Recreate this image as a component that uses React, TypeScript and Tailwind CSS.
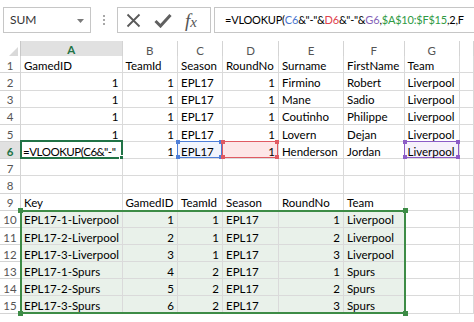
import type { ReactNode } from 'react'

type Val = string | number

const COLS = ['A', 'B', 'C', 'D', 'E', 'F', 'G', '']

const DATA: Val[][] = [
  ['GamedID', 'TeamId', 'Season', 'RoundNo', 'Surname', 'FirstName', 'Team'],
  [1, 1, 'EPL17', 1, 'Firmino', 'Robert', 'Liverpool'],
  [1, 1, 'EPL17', 1, 'Mane', 'Sadio', 'Liverpool'],
  [1, 1, 'EPL17', 1, 'Coutinho', 'Philippe', 'Liverpool'],
  [1, 1, 'EPL17', 1, 'Lovern', 'Dejan', 'Liverpool'],
  ['=VLOOKUP(C6&"-"', 1, 'EPL17', 1, 'Henderson', 'Jordan', 'Liverpool'],
  [],
  [],
  ['Key', 'GamedID', 'TeamId', 'Season', 'RoundNo', 'Team'],
  ['EPL17-1-Liverpool', 1, 1, 'EPL17', 1, 'Liverpool'],
  ['EPL17-2-Liverpool', 2, 1, 'EPL17', 2, 'Liverpool'],
  ['EPL17-3-Liverpool', 3, 1, 'EPL17', 3, 'Liverpool'],
  ['EPL17-1-Spurs', 4, 2, 'EPL17', 1, 'Spurs'],
  ['EPL17-2-Spurs', 5, 2, 'EPL17', 2, 'Spurs'],
  ['EPL17-3-Spurs', 6, 2, 'EPL17', 3, 'Spurs'],
]

const GRID = 'grid grid-cols-[21px_101.5px_55.5px_45px_56px_65px_60.5px_55.5px_1fr]'

function Corners({ color }: { color: string }) {
  const dot = `absolute w-[4px] h-[4px] ${color}`
  return (
    <>
      <span className={`${dot} -left-[2px] -top-[2px]`} />
      <span className={`${dot} -right-[2px] -top-[2px]`} />
      <span className={`${dot} -left-[2px] -bottom-[2px]`} />
      <span className={`${dot} -right-[2px] -bottom-[2px]`} />
    </>
  )
}

function Finder({ border, dot, fill }: { border: string; dot: string; fill: string }) {
  return (
    <div className={`absolute -left-[1px] -top-[1px] right-0 bottom-0 border ${border} ${fill}`}>
      <Corners color={dot} />
    </div>
  )
}

function Cell({ value, row, col }: { value?: Val; row: number; col: number }) {
  const isNum = typeof value === 'number'
  const inRange = row >= 9 && col <= 5
  const editing = row === 5 && col === 0
  let overlay: ReactNode = null

  if (editing) {
    overlay = (
      <div className="absolute -left-[1px] -top-[2px] -right-[1px] -bottom-[1px] border-2 border-[#217346]">
        <span className="absolute -right-[4px] -bottom-[4px] w-[6px] h-[6px] bg-[#217346] border border-white" />
      </div>
    )
  } else if (row === 5 && col === 2) {
    overlay = <Finder border="border-[#4f7fd8]" dot="bg-[#4f7fd8]" fill="bg-[#f1f5fd]" />
  } else if (row === 5 && col === 3) {
    overlay = <Finder border="border-[#e05a62]" dot="bg-[#e05a62]" fill="bg-[#fde6e7]" />
  } else if (row === 5 && col === 6) {
    overlay = <Finder border="border-[#8c5cc6]" dot="bg-[#8c5cc6]" fill="bg-[#f6f1fb]" />
  }

  return (
    <div
      className={`relative h-full border-r border-b border-[#dadada] ${inRange ? 'bg-[#e9f1ea]' : 'bg-white'}`}
    >
      {overlay}
      {value !== undefined && (
        <div
          className={`relative h-full overflow-hidden whitespace-nowrap leading-none flex items-end pb-[1px] ${
            editing ? 'pl-[2px] pr-0 tracking-[-0.45px]' : 'px-[3px]'
          } ${isNum ? 'justify-end' : 'justify-start'}`}
        >
          {value}
        </div>
      )}
    </div>
  )
}

function Toolbar() {
  return (
    <div className="flex items-start h-[41px] pt-[7px] bg-white">
      <div className="shrink-0 ml-[3px] w-[88px] h-[26px] border border-[#c6c6c6] flex items-center pl-[6px] pr-[6px] text-[12px] text-[#333]">
        <span className="flex-1">SUM</span>
        <svg width="7" height="4" viewBox="0 0 7 4" className="mt-[1px]">
          <path d="M0 0h7L3.5 4z" fill="#7a7a7a" />
        </svg>
      </div>
      <div className="shrink-0 w-[26px] h-[26px] flex flex-col items-center justify-center gap-[2px]">
        <span className="w-[2px] h-[2px] bg-[#a8a8a8]" />
        <span className="w-[2px] h-[2px] bg-[#a8a8a8]" />
        <span className="w-[2px] h-[2px] bg-[#a8a8a8]" />
      </div>
      <div className="shrink-0 w-[94px] h-[26px] border border-[#c6c6c6] flex items-center pl-[8px] gap-[13px]">
        <svg width="15" height="15" viewBox="0 0 15 15">
          <path d="M1.5 1.5l12 12M13.5 1.5l-12 12" stroke="#5a5a5a" strokeWidth="1.8" fill="none" />
        </svg>
        <svg width="18" height="15" viewBox="0 0 18 15">
          <path d="M1.5 8l5 5L16.5 2" stroke="#606060" strokeWidth="3" fill="none" />
        </svg>
        <span className="font-['Liberation_Serif',serif] italic text-[19px] leading-none text-[#555]">
          f<span className="text-[15px]">x</span>
        </span>
      </div>
      <div className="flex-1 min-w-0 ml-[3px] h-[26px] border border-[#c6c6c6] border-r-0 flex items-center pl-[10px] overflow-hidden whitespace-nowrap text-[11px] tracking-[-0.2px] text-black">
        <span>=VLOOKUP(</span>
        <span className="text-[#4a74cc]">C6</span>
        <span>&amp;"-"&amp;</span>
        <span className="text-[#e0424c]">D6</span>
        <span>&amp;"-"&amp;</span>
        <span className="text-[#8462b8]">G6</span>
        <span>,</span>
        <span className="text-[#2f9a44]">$A$10:$F$15</span>
        <span>,2,F</span>
      </div>
    </div>
  )
}

export default function App() {
  return (
    <div className="w-[474px] h-[322px] overflow-hidden bg-white font-['Lato','Liberation_Sans',sans-serif] text-[11.5px] text-black">
      <Toolbar />

      <div className={`${GRID} h-[15.3px] text-[#555]`}>
        <div className="relative border-r border-b border-[#c8c8c8] bg-white">
          <svg width="10" height="10" viewBox="0 0 10 10" className="absolute right-[2px] bottom-[2px]">
            <path d="M10 0v10H0z" fill="#d9d9d9" />
          </svg>
        </div>
        {COLS.map((c, i) => (
          <div
            key={i}
            className={`flex items-center justify-center border-r border-[#d4d4d4] ${
              i === 0
                ? 'bg-[#e1e1e1] text-[#217346] font-bold border-b-2 border-b-[#217346]'
                : 'bg-white border-b border-b-[#c8c8c8]'
            }`}
          >
            {c}
          </div>
        ))}
      </div>

      <div className="relative">
        {DATA.map((cells, r) => (
          <div key={r} className={`${GRID} h-[17.17px]`}>
            <div
              className={`flex items-end pb-[1px] leading-none justify-center border-r border-b border-[#d4d4d4] ${
                r === 5 ? 'bg-[#e1e1e1] text-[#217346] font-bold' : 'bg-white text-[#555]'
              }`}
            >
              {r + 1}
            </div>
            {COLS.map((_, c) => (
              <Cell key={c} value={cells[c]} row={r} col={c} />
            ))}
          </div>
        ))}
        <div className="absolute left-[20px] top-[153.5px] w-[385.5px] h-[104px] border-2 border-[#3d8c46] pointer-events-none">
          <span className="absolute -left-[4px] -top-[4px] w-[5px] h-[5px] bg-[#3d8c46]" />
          <span className="absolute -right-[4px] -top-[4px] w-[5px] h-[5px] bg-[#3d8c46]" />
          <span className="absolute -left-[4px] -bottom-[4px] w-[5px] h-[5px] bg-[#3d8c46]" />
          <span className="absolute -right-[4px] -bottom-[4px] w-[5px] h-[5px] bg-[#3d8c46]" />
        </div>
      </div>
    </div>
  )
}
